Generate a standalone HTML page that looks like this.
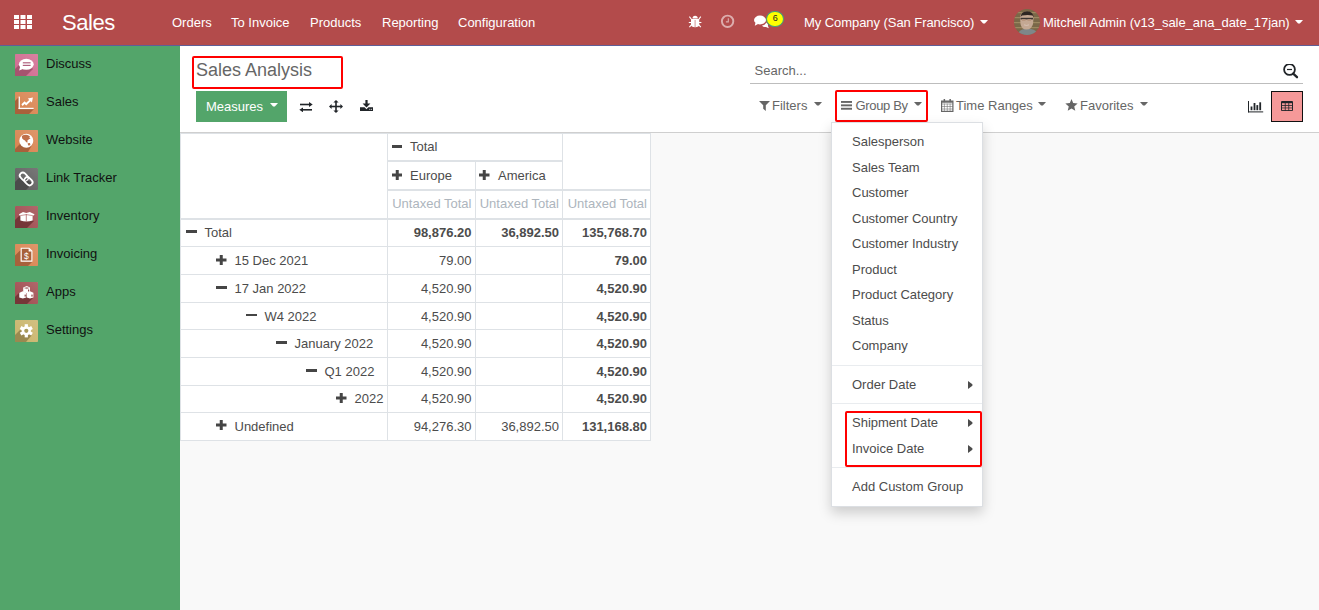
<!DOCTYPE html>
<html><head><meta charset="utf-8">
<style>
*{box-sizing:border-box;margin:0;padding:0}
html,body{width:1319px;height:610px;overflow:hidden;background:#f9f9f9;font-family:"Liberation Sans",sans-serif;font-size:13px;color:#4c4c4c}
.abs{position:absolute}
#nav{position:absolute;left:0;top:0;width:1319px;height:46px;background:#b34b4b;border-bottom:1px solid #5f5e97;color:#fff}
#nav .t{position:absolute;top:15px;font-size:13px;line-height:16px;white-space:nowrap}
#side{position:absolute;left:0;top:46px;width:180px;height:564px;background:#53a56a}
.app{position:absolute;left:15px;width:165px;height:24px}
.app .ic{position:absolute;left:0;top:0}
.app .lb{position:absolute;left:31px;top:2.2px;font-size:13px;line-height:16px;color:#111;white-space:nowrap}
#cp{position:absolute;left:180px;top:46px;width:1139px;height:87px;background:#fff;border-bottom:1px solid #cfcfcf}
.caret{position:absolute;width:0;height:0;border-left:3.8px solid transparent;border-right:3.8px solid transparent;border-top:3.3px solid #666}
.tx{position:absolute;font-size:13px;line-height:16px;white-space:nowrap;color:#4c4c4c}
</style></head>
<body>
<svg width="0" height="0" style="position:absolute"><defs><linearGradient id="icg" x1="0" y1="1" x2="1" y2="0"><stop offset="0" stop-color="#fff" stop-opacity="0"/><stop offset="1" stop-color="#fff" stop-opacity=".16"/></linearGradient></defs></svg>
<div id="nav">
  <svg class="abs" style="left:14px;top:15px" width="18" height="14" viewBox="0 0 18 14">
    <g fill="#fff"><rect x="0" y="0" width="5" height="4"/><rect x="6.5" y="0" width="5" height="4"/><rect x="13" y="0" width="5" height="4"/>
    <rect x="0" y="5" width="5" height="4"/><rect x="6.5" y="5" width="5" height="4"/><rect x="13" y="5" width="5" height="4"/>
    <rect x="0" y="10" width="5" height="4"/><rect x="6.5" y="10" width="5" height="4"/><rect x="13" y="10" width="5" height="4"/></g>
  </svg>
  <div class="t" style="left:62px;top:9.8px;font-size:22px;line-height:26px;letter-spacing:-0.45px">Sales</div>
  <div class="t" style="left:172px">Orders</div>
  <div class="t" style="left:231px">To Invoice</div>
  <div class="t" style="left:310px">Products</div>
  <div class="t" style="left:382px">Reporting</div>
  <div class="t" style="left:458px">Configuration</div>
  
  <svg class="abs" style="left:688px;top:15px" width="14" height="13" viewBox="0 0 14 13"><g fill="#fff"><path d="M4.5 3.4 Q4.6 0.8 7.15 0.8 Q9.7 0.8 9.8 3.4Z"/><path d="M3 4 H11.2 V9.5 Q11.2 12.2 7.1 12.2 Q3 12.2 3 9.5Z"/></g><g stroke="#fff" stroke-width="1.1" fill="none"><path d="M0.8 7.5H13.4"/><path d="M1.4 1.6 L3.6 4.5 M12.8 1.6 L10.6 4.5 M1.4 12.2 L3.6 9.6 M12.8 12.2 L10.6 9.6"/></g><path d="M7.1 5V12" stroke="#d08a8a" stroke-width=".9"/></svg>
  <svg class="abs" style="left:720px;top:14px" width="15" height="15" viewBox="0 0 15 15"><circle cx="7.6" cy="7.3" r="5.7" fill="none" stroke="#fff" stroke-opacity=".55" stroke-width="1.9"/><path d="M8.3 4.2 V7.9 H5.9" fill="none" stroke="#fff" stroke-opacity=".55" stroke-width="1.1"/></svg>
  <svg class="abs" style="left:753px;top:14px" width="17" height="15" viewBox="0 0 17 15"><g fill="#fff"><ellipse cx="7" cy="6" rx="6" ry="4.4"/><path d="M2.5 8.5 L1.8 11.8 L5.5 9.8Z"/><path d="M9 11.5 Q12 11 13.6 8.5 Q15.5 10 15 12 L15.8 14.2 L13 12.9 Q10.5 13.6 9 11.5Z"/></g></svg>
  <div class="abs" style="left:766.3px;top:11px;width:17.3px;height:15.9px;border-radius:50%;background:#ff0;border:1px solid #44a078"></div>
  <div class="abs" style="left:766.5px;top:12.2px;width:17.3px;text-align:center;font-size:9px;line-height:12px;color:#222">6</div>
  <svg class="abs" style="left:980px;top:19.8px" width="8" height="4" viewBox="0 0 8 4"><path d="M0 0H8L4.9 3.4H3.1Z" fill="#fff"/></svg>
  <svg class="abs" style="left:1295.2px;top:19.8px" width="8" height="4" viewBox="0 0 8 4"><path d="M0 0H8L4.9 3.4H3.1Z" fill="#fff"/></svg>
  <svg class="abs" style="left:1014px;top:9px" width="26" height="26" viewBox="0 0 26 26"><defs><clipPath id="av"><circle cx="13" cy="13" r="13"/></clipPath><filter id="bl"><feGaussianBlur stdDeviation="0.6"/></filter></defs><g clip-path="url(#av)"><rect width="26" height="26" fill="#7a6848"/><g filter="url(#bl)"><rect x="0" y="3" width="26" height="1.2" fill="#9c8860"/><rect x="0" y="8" width="26" height="1.2" fill="#9c8860"/><rect x="0" y="13" width="26" height="1.2" fill="#9c8860"/><rect x="0" y="18" width="26" height="1.2" fill="#9c8860"/><path d="M3 27 Q5 20 11 20 L17 20 Q23 21 25 27Z" fill="#7e8789"/><path d="M6 8 Q6.5 3 12.5 2.5 Q19 2.5 19.5 9 L19 15 Q17.5 20.5 12.5 20.5 Q7.5 20.5 6.5 15Z" fill="#c4a893"/><path d="M6.5 8 Q7 2.5 13 2.2 Q19.5 2.5 19.8 9 L18.6 6.6 Q14 5.2 8 6.6Z" fill="#2f2620"/><rect x="6.5" y="8.8" width="12.5" height="1.6" fill="#3e3430"/><rect x="8" y="10.2" width="3.5" height="1.8" fill="#b8967e"/><rect x="13.5" y="10.2" width="3.5" height="1.8" fill="#b8967e"/><path d="M10 15.8 Q12.5 17.2 15 15.8" stroke="#d9c6bb" stroke-width=".8" fill="none"/></g></g></svg>
  <div class="t" style="left:804px;letter-spacing:-0.06px">My Company (San Francisco)</div>
  <div class="t" style="left:1043px;letter-spacing:-0.05px">Mitchell Admin (v13_sale_ana_date_17jan)</div>
</div>
<div id="side">
  <div class="app" style="top:8px"><svg class="ic" width="23" height="22" viewBox="0 0 23 22"><defs></defs><rect width="23" height="22" rx="1" fill="#d06a8f"/><rect width="23" height="22" fill="url(#icg)"/><polygon points="4,11 0,15 0,22 11,22 18,15 16,13" fill="#a6536f"/><ellipse cx="11.3" cy="10.3" rx="7.4" ry="5.5" fill="#fff"/><path d="M5.2 12.5 L4.2 16.5 L8.6 14.8Z" fill="#fff"/><rect x="7.8" y="8.2" width="7.8" height="1.2" fill="#b0607e"/><rect x="7.8" y="10.8" width="7.8" height="1.2" fill="#b0607e"/></svg><div class="lb">Discuss</div></div>
  <div class="app" style="top:46px"><svg class="ic" width="23" height="22" viewBox="0 0 23 22"><defs></defs><rect width="23" height="22" rx="1" fill="#d9834f"/><rect width="23" height="22" fill="url(#icg)"/><polygon points="4,5 0,9 0,22 14,22 19,17 5,17" fill="#a8613b"/><rect x="3.6" y="4.6" width="1.3" height="12.4" fill="#fff"/><rect x="3.6" y="15.8" width="15" height="1.3" fill="#fff"/><path d="M6.4 12.2 L9.6 9.2 L11.2 10.8 L14.2 7.9 L12.8 6.5 L17.9 5.5 L16.9 10.6 L15.6 9.3 L11.2 13.6 L9.6 12 L7.6 14Z" fill="#fff"/></svg><div class="lb">Sales</div></div>
  <div class="app" style="top:84px"><svg class="ic" width="23" height="22" viewBox="0 0 23 22"><defs></defs><rect width="23" height="22" rx="1" fill="#d9834f"/><rect width="23" height="22" fill="url(#icg)"/><polygon points="5,14 0,19 0,22 13,22 17,15" fill="#a8613b"/><circle cx="11.3" cy="10.8" r="7" fill="#fff"/><path d="M6.8 6 Q9 4.4 12.5 4.9 L15 6.2 L14.2 7.4 L15.6 8.2 L13.6 9.4 L12.4 10.6 L12.6 12.4 L11.2 12.2 L10 10.4 L8.6 9.8 L7.2 8.4Z" fill="#c0704a"/><path d="M12.6 13.2 L15 13 L15.4 15.2 L13.2 15.4Z" fill="#c0704a"/></svg><div class="lb">Website</div></div>
  <div class="app" style="top:122px"><svg class="ic" width="23" height="22" viewBox="0 0 23 22"><defs></defs><rect width="23" height="22" rx="1" fill="#5e5e5e"/><rect width="23" height="22" fill="url(#icg)"/><polygon points="5,9 0,14 0,22 11,22 18,15" fill="#4b4b4b"/><g fill="none" stroke="#fff" stroke-width="1.8" transform="rotate(45 11.2 11)"><rect x="3.4" y="8" width="9" height="6" rx="3"/><rect x="9.9" y="8" width="9" height="6" rx="3"/></g><path d="M10.3 12.4 L12.4 10.3" stroke="#5e5e5e" stroke-width="1.2"/></svg><div class="lb">Link Tracker</div></div>
  <div class="app" style="top:160px"><svg class="ic" width="23" height="22" viewBox="0 0 23 22"><defs></defs><rect width="23" height="22" rx="1" fill="#a04b4f"/><rect width="23" height="22" fill="url(#icg)"/><polygon points="4,10 0,14 0,22 12,22 19,15" fill="#763638"/><path d="M4 8.2 L8 6 L11.3 7 L14.8 6 L19.5 8.2 L18.8 9.4 L17.6 9.2 L17.6 14.6 Q11.3 16.6 5.4 14.6 L5.4 9.2 L4.4 9.4Z" fill="#fff"/><path d="M11.3 8 V15.6" stroke="#a84f52" stroke-width=".7"/><path d="M5.4 9.6 L11.3 8.6 L17.6 9.6" stroke="#a84f52" stroke-width=".6" fill="none"/></svg><div class="lb">Inventory</div></div>
  <div class="app" style="top:198px"><svg class="ic" width="23" height="22" viewBox="0 0 23 22"><defs></defs><rect width="23" height="22" rx="1" fill="#d9834f"/><rect width="23" height="22" fill="url(#icg)"/><polygon points="5.5,6 0,11.5 0,22 13,22 17.5,17.5 5.5,17.5" fill="#a8613b"/><path d="M6.2 4.2 H14 L16.9 7 V17.1 H6.2Z" fill="#a8613b" stroke="#fff" stroke-width="1.1"/><path d="M13.6 4.2 L16.9 7.4 L13.6 7.4Z" fill="#fff"/><text x="11.3" y="14.6" font-family="Liberation Sans" font-size="8.5" fill="#fff" text-anchor="middle">$</text></svg><div class="lb">Invoicing</div></div>
  <div class="app" style="top:236px"><svg class="ic" width="23" height="22" viewBox="0 0 23 22"><defs></defs><rect width="23" height="22" rx="1" fill="#a04b4f"/><rect width="23" height="22" fill="url(#icg)"/><polygon points="5,10 0,15 0,22 12,22 18,16" fill="#763638"/><path d="M8.2 5.5 L11.8 4 L15 5.5 V10 L11.8 11.2 L8.2 10Z" fill="#fff"/><path d="M4.3 10.8 L7.8 9.3 L11.2 10.8 V15.5 L7.8 16.5 L4.3 15.5Z" fill="#fff"/><path d="M11.7 10.8 L15 9.3 L18.4 10.8 V15.5 L15 16.5 L11.7 15.5Z" fill="#fff"/><g fill="#8e4345"><path d="M8.8 6 L11.8 7.2 L14.5 6 L11.8 5Z" opacity=".6"/><rect x="13" y="7.5" width="1.2" height="2"/><rect x="9.6" y="12.6" width="1.2" height="2"/><rect x="16.4" y="12.6" width="1.2" height="2"/></g></svg><div class="lb">Apps</div></div>
  <div class="app" style="top:274px"><svg class="ic" width="23" height="22" viewBox="0 0 23 22"><defs></defs><rect width="23" height="22" rx="1" fill="#c9b46a"/><rect width="23" height="22" fill="url(#icg)"/><polygon points="5,10 0,15 0,22 11,22 17,15" fill="#9a8950"/><g transform="translate(11.3,10.8)" fill="#fff"><circle r="4.6"/><g id="t"><rect x="-1.6" y="-6.6" width="3.2" height="3"/></g><rect x="-1.6" y="-6.6" width="3.2" height="3" transform="rotate(60)"/><rect x="-1.6" y="-6.6" width="3.2" height="3" transform="rotate(120)"/><rect x="-1.6" y="-6.6" width="3.2" height="3" transform="rotate(180)"/><rect x="-1.6" y="-6.6" width="3.2" height="3" transform="rotate(240)"/><rect x="-1.6" y="-6.6" width="3.2" height="3" transform="rotate(300)"/><circle r="2.1" fill="#a89a5a"/></g></svg><div class="lb">Settings</div></div>
</div>
<div id="cp">
  <div class="abs" style="left:12px;top:10px;width:151px;height:33px;border:2px solid #f00;border-radius:2px"></div>
  <div class="abs" style="left:16px;top:14px;font-size:18px;line-height:20px;color:#666;white-space:nowrap">Sales Analysis</div>
  <div class="abs" style="left:16px;top:45px;width:91px;height:31px;background:#53a56a"></div>
  <div class="abs" style="left:26px;top:53px;color:#fff;line-height:16px">Measures</div>
  <svg class="abs" style="left:90.1px;top:56.8px" width="8" height="4" viewBox="0 0 8 4"><path d="M0 0H8L4.9 3.4H3.1Z" fill="#fff"/></svg>
  <svg class="abs" style="left:119px;top:55.6px" width="14" height="10.5" viewBox="0 0 14 10.5"><g fill="#212529"><rect x="1" y="1.7" width="9.5" height="1.6"/><path d="M10 0 L13.7 2.5 L10 5Z"/><rect x="3.5" y="7" width="9.5" height="1.6"/><path d="M4 5.5 L0.3 7.8 L4 10.3Z"/></g></svg>
  <svg class="abs" style="left:149.2px;top:53.9px" width="14" height="13" viewBox="0 0 14 13"><g fill="#212529"><rect x="6.2" y="2" width="1.6" height="9"/><rect x="2" y="5.7" width="10" height="1.6"/><path d="M7 0 L9.6 2.6 L4.4 2.6Z M7 13 L9.6 10.4 L4.4 10.4Z M0 6.5 L2.6 3.9 L2.6 9.1Z M14 6.5 L11.4 3.9 L11.4 9.1Z"/></g></svg>
  <svg class="abs" style="left:179.5px;top:53.9px" width="13" height="11.5" viewBox="0 0 13 11.5"><g fill="#212529"><rect x="5.4" y="0" width="2.2" height="4"/><path d="M2.6 3.6 L10.4 3.6 L6.5 7.4Z"/><path d="M0 7.3 L4.6 7.3 L6.5 9.2 L8.4 7.3 L13 7.3 L13 11.2 L0 11.2Z"/></g><circle cx="9.8" cy="9.3" r=".55" fill="#fff"/><circle cx="11.4" cy="9.3" r=".55" fill="#fff"/></svg>

  <div class="abs" style="left:570px;top:37px;width:553px;height:1px;background:#bdbdbd"></div>
  <div class="abs" style="left:574.5px;top:17px;line-height:16px;color:#666">Search...</div>
  <svg class="abs" style="left:1103px;top:18px" width="16" height="15" viewBox="0 0 16 15"><circle cx="6.5" cy="5.5" r="5.4" fill="none" stroke="#212529" stroke-width="1.8"/><rect x="4" y="4.9" width="5" height="1.2" fill="#212529"/><path d="M10.2 9.6 L14 13.2" stroke="#212529" stroke-width="2.3" stroke-linecap="round"/></svg>

  <svg class="abs" style="left:578.5px;top:54.8px" width="11" height="10" viewBox="0 0 11 10"><path d="M0 0 L11 0 L6.8 4.3 L6.8 10 L4.2 7.8 L4.2 4.3Z" fill="#666"/></svg>
  <div class="abs" style="left:592px;top:52px;line-height:16px;color:#666">Filters</div>
  <svg class="abs" style="left:634.0px;top:56.0px" width="8" height="4" viewBox="0 0 8 4"><path d="M0 0H8L4.9 3.4H3.1Z" fill="#666"/></svg>

  <div class="abs" style="left:655px;top:44px;width:93px;height:32px;border:2px solid #f00;border-radius:2px"></div>
  <svg class="abs" style="left:660.8px;top:55.2px" width="11" height="9" viewBox="0 0 11 9"><g fill="#666"><rect x="0" y="0" width="11" height="1.9"/><rect x="0" y="3.4" width="11" height="1.9"/><rect x="0" y="6.8" width="11" height="1.9"/></g></svg>
  <div class="abs" style="left:675.5px;top:52px;line-height:16px;color:#666;letter-spacing:-0.33px">Group By</div>
  <svg class="abs" style="left:734.0px;top:56.0px" width="8" height="4" viewBox="0 0 8 4"><path d="M0 0H8L4.9 3.4H3.1Z" fill="#666"/></svg>

  <svg class="abs" style="left:761px;top:53px" width="13" height="13" viewBox="0 0 13 13"><g fill="none" stroke="#666"><rect x="0.6" y="2.1" width="11.3" height="10.3" stroke-width="1.2"/><path d="M0.6 5H11.9 M0.6 7.5H11.9 M0.6 10H11.9 M3.4 4.6V12.4 M6.25 4.6V12.4 M9.1 4.6V12.4" stroke-width=".55"/></g><g fill="#666"><rect x="0.6" y="2.1" width="11.3" height="1.6"/><rect x="2.6" y="0" width="1.5" height="3.2"/><rect x="8.4" y="0" width="1.5" height="3.2"/></g></svg>
  <div class="abs" style="left:776px;top:52px;line-height:16px;color:#666">Time Ranges</div>
  <svg class="abs" style="left:858.0px;top:56.0px" width="8" height="4" viewBox="0 0 8 4"><path d="M0 0H8L4.9 3.4H3.1Z" fill="#666"/></svg>

  <svg class="abs" style="left:884.5px;top:52.8px" width="13" height="12.4" viewBox="0 0 24 23"><path d="M12 0 L15.1 7.6 L23.4 8.3 L17.1 13.7 L19 21.8 L12 17.5 L5 21.8 L6.9 13.7 L0.6 8.3 L8.9 7.6Z" fill="#666"/></svg>
  <div class="abs" style="left:900px;top:52px;line-height:16px;color:#666">Favorites</div>
  <svg class="abs" style="left:959.8px;top:56.0px" width="8" height="4" viewBox="0 0 8 4"><path d="M0 0H8L4.9 3.4H3.1Z" fill="#666"/></svg>

  <svg class="abs" style="left:1068px;top:54.6px" width="16" height="12" viewBox="0 0 16 12"><g fill="#212529"><rect x="0" y="0" width="1" height="11.4"/><rect x="0" y="10.4" width="15.2" height="1"/><rect x="2.6" y="5.5" width="1.8" height="3.7"/><rect x="5.6" y="2" width="1.8" height="7.2"/><rect x="8.4" y="4.1" width="1.8" height="5.1"/><rect x="11.3" y="1.3" width="1.8" height="7.9"/></g></svg>
  <div class="abs" style="left:1091px;top:45px;width:32px;height:31px;background:#f59999;border:1px solid #111"></div>
  <svg class="abs" style="left:1101px;top:55px" width="12" height="10" viewBox="0 0 12 10"><rect x="0" y="0" width="12" height="10" rx="1" fill="#212529"/><g fill="#f59999"><rect x="1" y="2.2" width="2.8" height="1.8"/><rect x="4.6" y="2.2" width="2.8" height="1.8"/><rect x="8.2" y="2.2" width="2.8" height="1.8"/><rect x="1" y="4.8" width="2.8" height="1.8"/><rect x="4.6" y="4.8" width="2.8" height="1.8"/><rect x="8.2" y="4.8" width="2.8" height="1.8"/><rect x="1" y="7.3" width="2.8" height="1.8"/><rect x="4.6" y="7.3" width="2.8" height="1.8"/><rect x="8.2" y="7.3" width="2.8" height="1.8"/></g></svg>
</div>
<!--TABLE-->
<div class="abs" style="left:180px;top:133px;width:471px;height:308px;background:#fff"></div>
<div class="abs" style="left:180px;top:133px;width:471px;height:1px;background:#dee2e6"></div>
<div class="abs" style="left:387px;top:160px;width:176px;height:2px;background:#dee2e6"></div>
<div class="abs" style="left:387px;top:189px;width:264px;height:2px;background:#dee2e6"></div>
<div class="abs" style="left:180px;top:218px;width:471px;height:2px;background:#dee2e6"></div>
<div class="abs" style="left:180px;top:246px;width:471px;height:1px;background:#dee2e6"></div>
<div class="abs" style="left:180px;top:274px;width:471px;height:1px;background:#dee2e6"></div>
<div class="abs" style="left:180px;top:302px;width:471px;height:1px;background:#dee2e6"></div>
<div class="abs" style="left:180px;top:329px;width:471px;height:1px;background:#dee2e6"></div>
<div class="abs" style="left:180px;top:357px;width:471px;height:1px;background:#dee2e6"></div>
<div class="abs" style="left:180px;top:385px;width:471px;height:1px;background:#dee2e6"></div>
<div class="abs" style="left:180px;top:412px;width:471px;height:1px;background:#dee2e6"></div>
<div class="abs" style="left:180px;top:440px;width:471px;height:1px;background:#dee2e6"></div>
<div class="abs" style="left:180px;top:133px;width:1px;height:308px;background:#dee2e6"></div>
<div class="abs" style="left:387px;top:133px;width:1px;height:308px;background:#dee2e6"></div>
<div class="abs" style="left:475px;top:161px;width:1px;height:280px;background:#dee2e6"></div>
<div class="abs" style="left:562px;top:133px;width:1px;height:308px;background:#dee2e6"></div>
<div class="abs" style="left:650px;top:133px;width:1px;height:308px;background:#dee2e6"></div>
<div class="abs" style="left:391.5px;top:144.80px;width:10.5px;height:2.8px;background:#454545"></div>
<div class="tx" style="left:410px;top:139.20px;">Total</div>
<svg class="abs" style="left:391.5px;top:169.60px" width="10.5" height="10" viewBox="0 0 10.5 10"><path d="M3.75 0h3v3.5h3.75v3h-3.75v3.5h-3v-3.5h-3.75v-3h3.75z" fill="#454545"/></svg>
<div class="tx" style="left:410px;top:167.70px;">Europe</div>
<svg class="abs" style="left:479.3px;top:169.60px" width="10.5" height="10" viewBox="0 0 10.5 10"><path d="M3.75 0h3v3.5h3.75v3h-3.75v3.5h-3v-3.5h-3.75v-3h3.75z" fill="#454545"/></svg>
<div class="tx" style="left:498px;top:167.70px;">America</div>
<div class="tx" style="right:847.5px;top:196.20px;color:#adb5bd">Untaxed Total</div>
<div class="tx" style="right:760px;top:196.20px;color:#adb5bd">Untaxed Total</div>
<div class="tx" style="right:672px;top:196.20px;color:#adb5bd">Untaxed Total</div>
<div class="abs" style="left:186px;top:229.90px;width:10.5px;height:2.8px;background:#454545"></div>
<div class="tx" style="left:204.5px;top:224.80px;">Total</div>
<div class="tx" style="right:847.5px;top:224.80px;font-weight:700">98,876.20</div>
<div class="tx" style="right:760px;top:224.80px;font-weight:700">36,892.50</div>
<div class="tx" style="right:672px;top:224.80px;font-weight:700">135,768.70</div>
<svg class="abs" style="left:216px;top:254.60px" width="10.5" height="10" viewBox="0 0 10.5 10"><path d="M3.75 0h3v3.5h3.75v3h-3.75v3.5h-3v-3.5h-3.75v-3h3.75z" fill="#454545"/></svg>
<div class="tx" style="left:234.5px;top:253.10px;">15 Dec 2021</div>
<div class="tx" style="right:847.5px;top:253.10px;">79.00</div>
<div class="tx" style="right:672px;top:253.10px;font-weight:700">79.00</div>
<div class="abs" style="left:216px;top:286.00px;width:10.5px;height:2.8px;background:#454545"></div>
<div class="tx" style="left:234.5px;top:280.90px;">17 Jan 2022</div>
<div class="tx" style="right:847.5px;top:280.90px;">4,520.90</div>
<div class="tx" style="right:672px;top:280.90px;font-weight:700">4,520.90</div>
<div class="abs" style="left:246px;top:313.60px;width:10.5px;height:2.8px;background:#454545"></div>
<div class="tx" style="left:264.5px;top:308.50px;">W4 2022</div>
<div class="tx" style="right:847.5px;top:308.50px;">4,520.90</div>
<div class="tx" style="right:672px;top:308.50px;font-weight:700">4,520.90</div>
<div class="abs" style="left:276px;top:341.40px;width:10.5px;height:2.8px;background:#454545"></div>
<div class="tx" style="left:294.5px;top:336.30px;">January 2022</div>
<div class="tx" style="right:847.5px;top:336.30px;">4,520.90</div>
<div class="tx" style="right:672px;top:336.30px;font-weight:700">4,520.90</div>
<div class="abs" style="left:306px;top:368.90px;width:10.5px;height:2.8px;background:#454545"></div>
<div class="tx" style="left:324.5px;top:363.80px;">Q1 2022</div>
<div class="tx" style="right:847.5px;top:363.80px;">4,520.90</div>
<div class="tx" style="right:672px;top:363.80px;font-weight:700">4,520.90</div>
<svg class="abs" style="left:336px;top:392.80px" width="10.5" height="10" viewBox="0 0 10.5 10"><path d="M3.75 0h3v3.5h3.75v3h-3.75v3.5h-3v-3.5h-3.75v-3h3.75z" fill="#454545"/></svg>
<div class="tx" style="left:354.5px;top:391.30px;">2022</div>
<div class="tx" style="right:847.5px;top:391.30px;">4,520.90</div>
<div class="tx" style="right:672px;top:391.30px;font-weight:700">4,520.90</div>
<svg class="abs" style="left:216px;top:420.30px" width="10.5" height="10" viewBox="0 0 10.5 10"><path d="M3.75 0h3v3.5h3.75v3h-3.75v3.5h-3v-3.5h-3.75v-3h3.75z" fill="#454545"/></svg>
<div class="tx" style="left:234.5px;top:418.80px;">Undefined</div>
<div class="tx" style="right:847.5px;top:418.80px;">94,276.30</div>
<div class="tx" style="right:760px;top:418.80px;">36,892.50</div>
<div class="tx" style="right:672px;top:418.80px;font-weight:700">131,168.80</div>
<!--/TABLE-->
<!--DD-->
<div class="abs" style="left:831px;top:122px;width:152px;height:385px;background:#fff;border:1px solid #dcdfe3;box-shadow:0 6px 12px rgba(0,0,0,.175)"></div>
<div class="tx" style="left:852px;top:134.40px">Salesperson</div>
<div class="tx" style="left:852px;top:159.90px">Sales Team</div>
<div class="tx" style="left:852px;top:185.40px">Customer</div>
<div class="tx" style="left:852px;top:210.90px">Customer Country</div>
<div class="tx" style="left:852px;top:236.40px">Customer Industry</div>
<div class="tx" style="left:852px;top:261.90px">Product</div>
<div class="tx" style="left:852px;top:287.40px">Product Category</div>
<div class="tx" style="left:852px;top:312.90px">Status</div>
<div class="tx" style="left:852px;top:338.40px">Company</div>
<div class="abs" style="left:832px;top:365px;width:150px;height:1px;background:#e9ecef"></div>
<div class="abs" style="left:832px;top:403px;width:150px;height:1px;background:#e9ecef"></div>
<div class="abs" style="left:832px;top:467px;width:150px;height:1px;background:#e9ecef"></div>
<div class="tx" style="left:852px;top:377.30px">Order Date</div>
<svg class="abs" style="left:968px;top:380.6px" width="5" height="8" viewBox="0 0 5 8"><path d="M0 0L4.4 3.2V4.8L0 8Z" fill="#4c4c4c"/></svg>
<div class="tx" style="left:852px;top:415.40px">Shipment Date</div>
<svg class="abs" style="left:968px;top:418.8px" width="5" height="8" viewBox="0 0 5 8"><path d="M0 0L4.4 3.2V4.8L0 8Z" fill="#4c4c4c"/></svg>
<div class="tx" style="left:852px;top:441.40px">Invoice Date</div>
<svg class="abs" style="left:968px;top:444.8px" width="5" height="8" viewBox="0 0 5 8"><path d="M0 0L4.4 3.2V4.8L0 8Z" fill="#4c4c4c"/></svg>
<div class="tx" style="left:852px;top:479.30px">Add Custom Group</div>
<div class="abs" style="left:845px;top:411px;width:137px;height:56px;border:2px solid #f00;border-radius:2px"></div>
<!--/DD-->
</body></html>
